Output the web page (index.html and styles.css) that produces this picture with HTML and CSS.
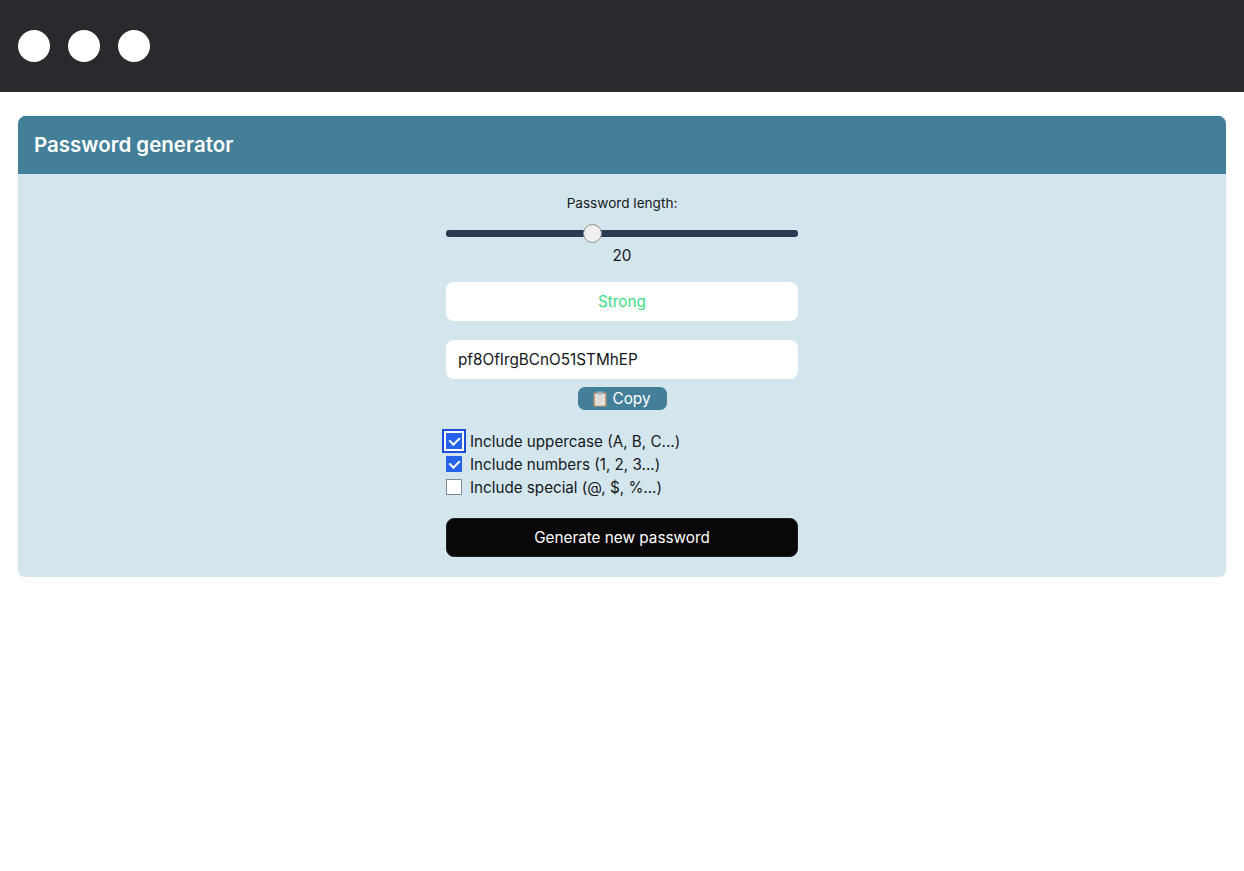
FILE: index.html
```html
<!DOCTYPE html>
<html lang="en">
<head>
<meta charset="utf-8">
<title>Password generator</title>
<link rel="stylesheet" href="styles.css">
</head>
<body>
<header class="topbar">
  <span class="dot"></span><span class="dot"></span><span class="dot"></span>
</header>
<main class="page">
  <section class="card">
    <h1 class="card-title">Password generator</h1>
    <div class="card-body">
      <form class="form">
        <label class="length-label" for="len">Password length:</label>
        <input class="slider" id="len" type="range" min="6" max="40" value="20">
        <div class="length-value">20</div>
        <div class="field strength">Strong</div>
        <input class="field password" type="text" value="pf8OfIrgBCnO51STMhEP">
        <button class="copy" type="button">
          <svg class="clip" width="14" height="16" viewBox="0 0 14 16" aria-hidden="true">
            <rect x="0.5" y="1.5" width="13" height="14" rx="1" fill="#c49a76"/>
            <rect x="2" y="3" width="10" height="11.5" fill="#e6e3dc"/>
            <rect x="4" y="0.5" width="6" height="3" rx="0.8" fill="#9fb0b8"/>
            <path d="M3.5 6h7M3.5 8h7M3.5 10h7M3.5 12h5" stroke="#d3d0c8" stroke-width="0.8"/>
          </svg>
          <span>Copy</span>
        </button>
        <div class="options">
          <label class="option"><input class="check focused" type="checkbox" checked>Include uppercase (A, B, C...)</label>
          <label class="option"><input class="check" type="checkbox" checked>Include numbers (1, 2, 3...)</label>
          <label class="option"><input class="check" type="checkbox">Include special (@, $, %...)</label>
        </div>
        <button class="generate" type="button">Generate new password</button>
      </form>
    </div>
  </section>
</main>
</body>
</html>
```

FILE: styles.css
```css
* { box-sizing: border-box; }
html, body { margin: 0; padding: 0; }
body {
  background: #fff;
  color: #14181c;
  font-family: Inter, "Liberation Sans", sans-serif;
}
.topbar {
  height: 92px;
  background: #292a2d;
  display: flex;
  align-items: center;
  gap: 18px;
  padding-left: 18px;
}
.dot {
  width: 32px;
  height: 32px;
  border-radius: 50%;
  background: #fff;
}
.page { padding: 24px 18px 0; }
.card {
  border-radius: 8px;
  overflow: hidden;
  background: #d4e6ed;
  box-shadow: 0 1px 3px rgba(0, 0, 0, 0.08);
}
.card-title {
  margin: 0;
  height: 58px;
  padding: 0 16px 2px;
  display: flex;
  align-items: center;
  background: #447f9a;
  border-top: 1px solid #1f7f99;
  color: #fff;
  font-family: Inter, sans-serif;
  font-size: 20.5px;
  font-weight: 600;
}
.card-body {
  height: 403px;
  padding-top: 20px;
  display: flex;
  justify-content: center;
}
.form {
  width: 352px;
  display: flex;
  flex-direction: column;
  align-items: center;
}
.length-label {
  font-size: 13.6px;
  line-height: 18px;
  font-weight: 400;
}
.slider {
  -webkit-appearance: none;
  appearance: none;
  width: 352px;
  height: 20px;
  margin: 11px 0 0;
  background: transparent;
}
.slider::-webkit-slider-runnable-track {
  height: 7px;
  border-radius: 3px;
  background: #2b3a52;
}
.slider::-webkit-slider-thumb {
  -webkit-appearance: none;
  width: 19px;
  height: 19px;
  margin-top: -6px;
  border-radius: 50%;
  background: #efefef;
  border: 1px solid #8f8f8f;
}
.length-value {
  font-size: 15.3px;
  line-height: 20px;
  margin-top: 3px;
}
.field {
  width: 352px;
  height: 39px;
  border: 0;
  border-radius: 8px;
  background: #fff;
  font-family: inherit;
  font-size: 15.3px;
}
.strength {
  margin-top: 16px;
  display: flex;
  align-items: center;
  justify-content: center;
  color: #3ddc84;
}
.password {
  margin-top: 19px;
  padding: 0 12px;
  color: #14181c;
}
.copy {
  margin-top: 8px;
  width: 89px;
  height: 23px;
  padding: 0;
  border: 0;
  border-radius: 7px;
  background: #447f9a;
  color: #fff;
  font-family: inherit;
  font-size: 15.3px;
  display: flex;
  align-items: center;
  justify-content: center;
  gap: 5px;
}
.options {
  align-self: flex-start;
  margin-top: 19.5px;
  display: flex;
  flex-direction: column;
}
.option {
  display: flex;
  align-items: center;
  gap: 8px;
  height: 23.2px;
  font-size: 15.2px;
}
.check {
  -webkit-appearance: none;
  appearance: none;
  width: 16px;
  height: 16px;
  margin: 0;
  border: 1px solid #7f8a94;
  background: #fff;
  display: flex;
  align-items: center;
  justify-content: center;
}
.check:checked {
  background: #2563eb;
  border-color: #2563eb;
}
.check:checked::after {
  content: "";
  width: 5px;
  height: 8px;
  margin-top: -2px;
  border: solid #fff;
  border-width: 0 2px 2px 0;
  transform: rotate(45deg);
}
.focused {
  box-shadow: 0 0 0 2px #fff, 0 0 0 4px #1d4ed8;
}
.generate {
  margin-top: 19px;
  width: 352px;
  height: 39px;
  border: 1px solid #1f1f1f;
  border-radius: 8px;
  background: #0a0708;
  color: #fff;
  font-family: inherit;
  font-size: 15.3px;
  font-weight: 400;
}
```
